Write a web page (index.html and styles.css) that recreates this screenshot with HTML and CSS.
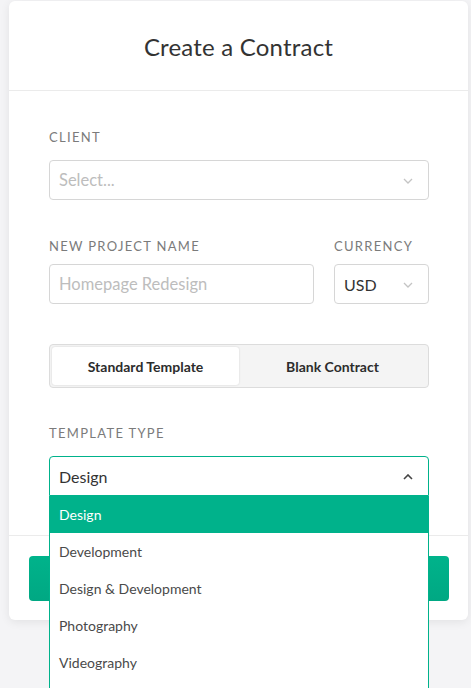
FILE: index.html
```html
<!DOCTYPE html>
<html lang="en">
<head>
<meta charset="utf-8">
<title>Create a Contract</title>
<link rel="stylesheet" href="styles.css">
</head>
<body>
<div class="modal">
  <div class="modal-header">
    <h1 class="title">Create a Contract</h1>
  </div>
  <div class="modal-body">
    <div class="field">
      <label class="label">Client</label>
      <div class="select">
        <span class="placeholder">Select...</span>
        <svg class="chev" width="10" height="6" viewBox="0 0 10 6"><path d="M1 1l4 4 4-4" fill="none" stroke="#c4c4c4" stroke-width="1.3"/></svg>
      </div>
    </div>
    <div class="row">
      <div class="field grow">
        <label class="label tight">New Project Name</label>
        <div class="input"><span class="placeholder">Homepage Redesign</span></div>
      </div>
      <div class="field currency">
        <label class="label tight">Currency</label>
        <div class="select">
          <span class="value">USD</span>
          <svg class="chev" width="10" height="6" viewBox="0 0 10 6"><path d="M1 1l4 4 4-4" fill="none" stroke="#c4c4c4" stroke-width="1.3"/></svg>
        </div>
      </div>
    </div>
    <div class="toggle">
      <div class="toggle-btn active">Standard Template</div>
      <div class="toggle-btn">Blank Contract</div>
    </div>
    <div class="field">
      <label class="label">Template Type</label>
      <div class="select-wrap">
        <div class="select open">
          <span class="value">Design</span>
          <svg class="chev" width="10" height="6" viewBox="0 0 10 6"><path d="M1 5l4-4 4 4" fill="none" stroke="#444" stroke-width="1.6"/></svg>
        </div>
        <ul class="menu">
          <li class="option selected">Design</li>
          <li class="option">Development</li>
          <li class="option">Design &amp; Development</li>
          <li class="option">Photography</li>
          <li class="option">Videography</li>
        </ul>
      </div>
    </div>
  </div>
  <div class="modal-footer">
    <button class="primary">Continue</button>
  </div>
</div>
</body>
</html>
```
FILE: styles.css
```css
html, body {
  margin: 0;
  padding: 0;
}
body {
  width: 471px;
  height: 688px;
  overflow: hidden;
  background: #f4f4f6;
  font-family: "Lato", "Open Sans", sans-serif;
  color: #333;
}
.modal {
  margin: 1px 3px 0 9px;
  background: #fff;
  border-radius: 6px;
  box-shadow: 0 2px 10px rgba(0, 0, 0, 0.08);
}
.modal-header {
  height: 89px;
  border-bottom: 1px solid #ebebeb;
  display: flex;
  align-items: center;
  justify-content: center;
}
.title {
  margin: 0;
  font-size: 24px;
  font-weight: 400;
  color: #333;
  letter-spacing: 0.2px;
  padding-top: 2px;
}
.modal-body {
  padding: 38px 39px 39px 40px;
  display: flex;
  flex-direction: column;
}
.field {
  display: flex;
  flex-direction: column;
}
.label {
  font-size: 13px;
  line-height: 16px;
  text-transform: uppercase;
  letter-spacing: 1.3px;
  color: #7b7b7b;
  margin-bottom: 15px;
}
.label.tight {
  margin-bottom: 10px;
}
.select, .input {
  height: 38px;
  border: 1px solid #d6d6d6;
  border-radius: 4px;
  display: flex;
  align-items: center;
  justify-content: space-between;
  padding: 0 15px 0 9px;
  font-size: 16.5px;
}
.placeholder {
  color: #bdbdbd;
}
.value {
  color: #333;
  font-size: 16px;
}
.chev {
  flex: none;
  margin-top: 1px;
}
.row {
  display: flex;
  gap: 20px;
  margin-top: 38px;
}
.grow {
  flex: 1;
}
.currency {
  width: 95px;
}
.toggle {
  margin-top: 40px;
  height: 38px;
  border: 1px solid #dcdcdc;
  border-radius: 4px;
  background: #f4f4f4;
  padding: 2px;
  display: flex;
}
.toggle-btn {
  flex: 1;
  display: flex;
  align-items: center;
  justify-content: center;
  font-size: 14px;
  font-weight: 700;
  color: #2c2c2c;
  border-radius: 3px;
}
.toggle-btn.active {
  background: #fff;
  box-shadow: 0 0 2px rgba(0, 0, 0, 0.15);
  flex: 0 0 187px;
}
.toggle + .field {
  margin-top: 37px;
}
.select-wrap {
  position: relative;
}
.select.open {
  border-color: #00b28b;
  border-radius: 4px 4px 0 0;
}
.menu {
  position: absolute;
  top: 100%;
  left: 0;
  right: 0;
  margin: 0;
  padding: 0 0 20px;
  list-style: none;
  background: #fff;
  border: 1px solid #00b28b;
  border-top: none;
  z-index: 5;
}
.option {
  height: 37px;
  display: flex;
  align-items: center;
  padding: 0 9px;
  font-size: 14px;
  color: #4a4a4a;
}
.option.selected {
  background: #00b28b;
  color: #fff;
}
.modal-footer {
  border-top: 1px solid #ebebeb;
  padding: 20px 19px 19px 20px;
}
.primary {
  display: block;
  width: 100%;
  height: 45px;
  border: none;
  border-radius: 4px;
  background: linear-gradient(#00b38b, #00a883);
  color: #fff;
  font-family: inherit;
  font-size: 15px;
  font-weight: 700;
}
```
